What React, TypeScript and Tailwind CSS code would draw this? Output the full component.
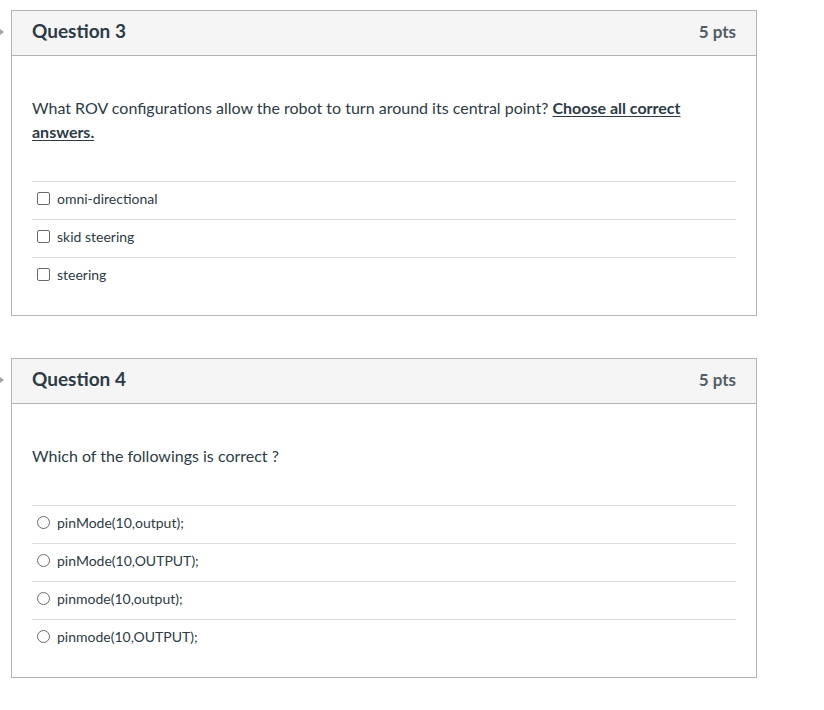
import React from "react";

type Question = {
  title: string;
  points: string;
  kind: "checkbox" | "radio";
  text: React.ReactNode;
  answers: string[];
};

const questions: Question[] = [
  {
    title: "Question 3",
    points: "5 pts",
    kind: "checkbox",
    text: (
      <>
        What ROV configurations allow the robot to turn around its central point?{" "}
        <strong className="font-bold underline underline-offset-2">Choose all correct answers.</strong>
      </>
    ),
    answers: ["omni-directional", "skid steering", "steering"],
  },
  {
    title: "Question 4",
    points: "5 pts",
    kind: "radio",
    text: "Which of the followings is correct ?",
    answers: [
      "pinMode(10,output);",
      "pinMode(10,OUTPUT);",
      "pinmode(10,output);",
      "pinmode(10,OUTPUT);",
    ],
  },
];

function Marker() {
  return (
    <div className="w-[11px] shrink-0 flex items-start pt-[19px]">
      <svg width="4" height="6" viewBox="0 0 4 6">
        <path d="M0 0 L4 3 L0 6 Z" fill="#a0a4a8" />
      </svg>
    </div>
  );
}

function QuestionCard({ q }: { q: Question }) {
  return (
    <div className="flex">
      <Marker />
      <div className="w-[746px] border border-[#b4b4b4] bg-white">
        <div className="h-[45px] pb-[3px] bg-[#f5f5f5] border-b border-[#b4b4b4] flex items-center justify-between px-5">
          <h2 className="text-[19px] font-bold text-[#2d3b45]">{q.title}</h2>
          <span className="text-[17px] font-bold text-[#535d65]">{q.points}</span>
        </div>
        <div className="px-5 pt-10 pb-5">
          <div className="text-[16px] leading-6 text-[#2d3b45] pr-[50px]">{q.text}</div>
          <div className="mt-[37px]">
            {q.answers.map((a, i) => (
              <label
                key={i}
                className="flex items-center h-[38px] pb-[5px] pl-[5px] gap-[7px] text-[14px] text-[#2d3b45] border-t border-[#dcdcdc]"
              >
                {q.kind === "checkbox" ? (
                  <span className="w-[13px] h-[13px] rounded-[2px] border border-[#6a6a6a] bg-white" />
                ) : (
                  <span className="w-[13px] h-[13px] rounded-full border border-[#6a6a6a] bg-white" />
                )}
                <span>{a}</span>
              </label>
            ))}
          </div>
        </div>
      </div>
    </div>
  );
}

export default function App() {
  return (
    <div
      className="w-[824px] h-[710px] bg-white pt-[10px] flex flex-col gap-[42px]"
      style={{ fontFamily: "Lato, 'Liberation Sans', sans-serif" }}
    >
      {questions.map((q) => (
        <QuestionCard key={q.title} q={q} />
      ))}
    </div>
  );
}
